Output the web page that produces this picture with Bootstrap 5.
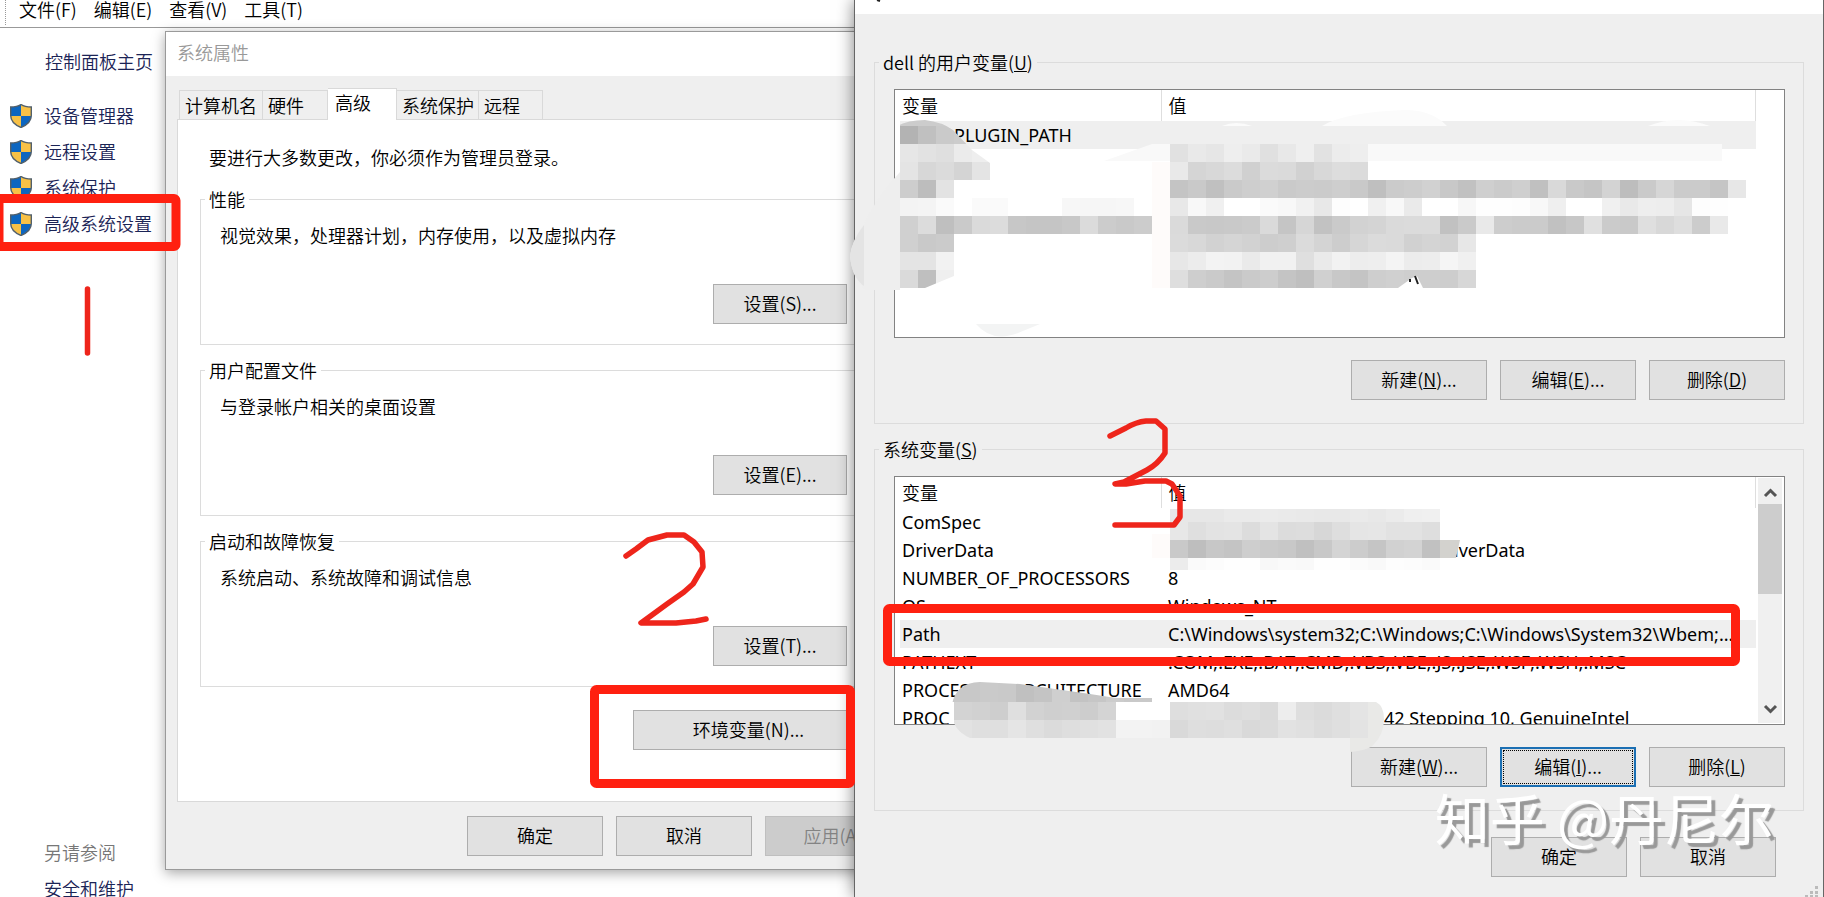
<!DOCTYPE html>
<html lang="zh-CN">
<head>
<meta charset="utf-8">
<meta name="viewport" content="width=device-width, initial-scale=1">
<title>系统属性 - 环境变量</title>
<link rel="stylesheet" href="https://cdn.jsdelivr.net/npm/bootstrap@5.3.0/dist/css/bootstrap.min.css">
<style>
  body { font: 350 18px/24px "Noto Sans CJK SC", sans-serif; color: #000; background: #fff; }
  button { font-weight: 350; }
  .desktop { height: 100vh; min-height: 897px; }
  .face { background: #efefef; }

  .menu-strip { height: 28px; padding-left: 19px; gap: 17px; border-bottom: 1px solid #999; }
  .menu-strip a { color: #000; height: 24px; line-height: 18px; }
  .menu-strip::before { content: ""; position: absolute; left: 5px; top: 0; height: 25px; border-left: 1px dotted #999; }

  .side { width: 165px; padding: 21px 0 0 10px; }
  .side a { color: #1b2456; }
  .side .home { margin-left: 35px; margin-bottom: 31px; }
  .task { height: 36px; gap: 12px; line-height: 22px; }
  .task svg { width: 22px; height: 24px; }
  .see-also { left: 44px; top: 834px; line-height: 36px; }
  .see-also span { color: #777; }

  .win-props { left: 165px; top: 31px; width: 748px; height: 839px; border: 1px solid #9a9a9a; box-shadow: 0 3px 12px rgba(0,0,0,.35); }
  .win-props .title { height: 44px; padding: 8px 11px; background: #fff; color: #999; }
  .win-props .inner { padding: 12px 11px 0; }
  .tabs button { background: #efefef; border: 1px solid #d9d9d9; border-bottom: 0; border-left-width: 0; height: 29px; text-align: left; white-space: nowrap; padding: 2px 5px; color: #000; }
  .tabs { height: 31px; padding-left: 2px; }
  .tabs button:first-child { border-left-width: 1px; }
  .tabs button.active { background: #fff; height: 32px; margin-bottom: -1px; position: relative; padding: 0 7px 6px; }
  .w-a { width: 84px; } .w-b { width: 65px; } .w-c { width: 69px; } .w-d { width: 82px; } .w-e { width: 64px; }
  .pane { background: #fff; border: 1px solid #d9d9d9; height: 683px; padding: 25px 22px 0; }
  .pane > p { margin: 0 9px 18px; }

  fieldset.group { border: 1px solid #dcdcdc; margin-bottom: 13px; }
  .group legend { float: none; width: auto; font-size: 18px; line-height: 24px; margin: 0 0 0 -15px; padding: 0 4px; }
  .pane .group { padding: 12px 30px 20px 19px; }
  .pane .group p { margin-bottom: 37px; }

  .push { height: 40px; width: 136px; padding: 0 0 2px; background: #e1e1e1; border: 1px solid #adadad; color: #000; }
  .push:disabled { background: #ccc; border-color: #bfbfbf; color: #838383; }
  .push.w-set { width: 134px; }
  .push.w-env { width: 231px; margin: 10px 14px 0 0; }
  .push.focus { border: 2px solid #1b6fb3; outline: 1px dotted #000; outline-offset: -4px; }
  .row-push { gap: 13px; }
  .foot-props { margin-top: 14px; }
  .foot-env { margin-top: 26px; padding-right: 28px; }

  .win-env { left: 854px; right: 0; top: 0; bottom: 0; border: 1px solid #666; border-width: 0 1px; box-shadow: 0 0 16px rgba(0,0,0,.5); }
  .win-env .title { height: 14px; background: #fff; }
  .win-env .inner { padding: 36px 19px 0; }
  .win-env .group { padding: 15px 18px 23px 19px; }
  .list-box { height: 249px; background: #fff; border: 1px solid #828282; margin-bottom: 22px; overflow: hidden; padding-left: 5px; }
  .vars { table-layout: fixed; width: 100%; font: 18px/28px "Noto Sans", "Noto Sans CJK SC", sans-serif; }
  .vars th { font: 350 18px/31px "Noto Sans CJK SC", sans-serif; height: 31px; border-right: 1px solid #dedede; }
  .vars th, .vars td { padding: 0 0 0 2px; white-space: nowrap; overflow: hidden; }
  .vars th:first-child { width: 261px; }
  .vars th + th, .vars td + td { padding-left: 7px; }
  .vars tr.sel td { background: #efefef; }
  .vars td { height: 28px; }
  .gap-a { margin-left: 52px; } .gap-b { margin-left: 286px; } .gap-c { margin-left: 216px; }
  .scroller { width: 24px; flex: none; margin: 1px 2px 1px 2px; background: #f0f0f0; }
  .scroller.off { visibility: hidden; }
  .scroller i { height: 90px; background: #cdcdcd; }
  .scroller svg { width: 24px; height: 26px; }

  .marks { left: 0; top: 0; width: 1824px; height: 897px; pointer-events: none; overflow: hidden; }
  .watermark { right: 50px; bottom: 46px; font-size: 55px; font-weight: 400; line-height: 70px; color: #fff; text-shadow: 4px 4px 1px #999; pointer-events: none; }
</style>
</head>
<body>
<svg class="d-none"><symbol id="shield" viewBox="0 0 22 24">
  <path d="M11 .5C8 2.500 4 3 .7 3v8.500C.7 17 5 21 11 23.500 17 21 21.300 17 21.300 11.500V3C18 3 14 2.500 11 .5z" fill="#f8c146"/>
  <path d="M11 .5C8 2.500 4 3 .7 3v9H11zM11 12h10.300C21.300 17 17 21 11 23.500z" fill="#0d66c0"/>
  <path d="M11 .5C8 2.500 4 3 .7 3v8.500C.7 17 5 21 11 23.500 17 21 21.300 17 21.300 11.500V3C18 3 14 2.500 11 .5z" fill="none" stroke="#52606b" stroke-width="1.400"/>
</symbol></svg>

<div class="desktop position-relative overflow-hidden">
  <nav class="menu-strip d-flex position-relative">
    <a class="text-decoration-none" href="#">文件(F)</a><a class="text-decoration-none" href="#">编辑(E)</a><a class="text-decoration-none" href="#">查看(V)</a><a class="text-decoration-none" href="#">工具(T)</a>
  </nav>
  <aside class="side d-flex flex-column">
    <a class="home text-decoration-none" href="#">控制面板主页</a>
    <a class="task d-flex text-decoration-none" href="#"><svg><use href="#shield"/></svg>设备管理器</a>
    <a class="task d-flex text-decoration-none" href="#"><svg><use href="#shield"/></svg>远程设置</a>
    <a class="task d-flex text-decoration-none" href="#"><svg><use href="#shield"/></svg>系统保护</a>
    <a class="task d-flex text-decoration-none" href="#"><svg><use href="#shield"/></svg>高级系统设置</a>
    <div class="see-also position-absolute d-flex flex-column"><span>另请参阅</span><a class="text-decoration-none" href="#">安全和维护</a></div>
  </aside>

  <section class="win-props face position-absolute">
    <div class="title">系统属性</div>
    <div class="inner">
      <div class="tabs d-flex align-items-end">
        <button class="w-a">计算机名</button><button class="w-b">硬件</button><button class="w-c active">高级</button><button class="w-d">系统保护</button><button class="w-e">远程</button>
      </div>
      <div class="pane">
        <p>要进行大多数更改，你必须作为管理员登录。</p>
        <fieldset class="group"><legend>性能</legend><p>视觉效果，处理器计划，内存使用，以及虚拟内存</p>
          <div class="d-flex justify-content-end"><button class="push w-set">设置(S)...</button></div></fieldset>
        <fieldset class="group"><legend>用户配置文件</legend><p>与登录帐户相关的桌面设置</p>
          <div class="d-flex justify-content-end"><button class="push w-set">设置(E)...</button></div></fieldset>
        <fieldset class="group"><legend>启动和故障恢复</legend><p>系统启动、系统故障和调试信息</p>
          <div class="d-flex justify-content-end"><button class="push w-set">设置(T)...</button></div></fieldset>
        <div class="d-flex justify-content-end"><button class="push w-env">环境变量(N)...</button></div>
      </div>
      <div class="row-push foot-props d-flex justify-content-end">
        <button class="push">确定</button><button class="push">取消</button><button class="push" disabled>应用(A)</button>
      </div>
    </div>
  </section>

  <section class="win-env face position-absolute">
    <div class="title"></div>
    <div class="inner">
      <fieldset class="group"><legend>dell 的用户变量(<u>U</u>)</legend>
        <div class="list-box d-flex">
          <div class="flex-grow-1"><table class="vars">
            <thead><tr><th>变量</th><th>值</th></tr></thead>
            <tbody><tr class="sel"><td><span class="gap-a">PLUGIN_PATH</span></td><td></td></tr></tbody>
          </table></div>
          <div class="scroller off"></div>
        </div>
        <div class="row-push d-flex justify-content-end">
          <button class="push">新建(<u>N</u>)...</button><button class="push">编辑(<u>E</u>)...</button><button class="push">删除(<u>D</u>)</button>
        </div>
      </fieldset>
      <fieldset class="group"><legend>系统变量(<u>S</u>)</legend>
        <div class="list-box d-flex">
          <div class="flex-grow-1"><table class="vars">
            <thead><tr><th>变量</th><th>值</th></tr></thead>
            <tbody>
              <tr><td>ComSpec</td><td></td></tr>
              <tr><td>DriverData</td><td><span class="gap-b">iverData</span></td></tr>
              <tr><td>NUMBER_OF_PROCESSORS</td><td>8</td></tr>
              <tr><td>OS</td><td>Windows_NT</td></tr>
              <tr class="sel"><td>Path</td><td>C:\Windows\system32;C:\Windows;C:\Windows\System32\Wbem;...</td></tr>
              <tr><td>PATHEXT</td><td>.COM;.EXE;.BAT;.CMD;.VBS;.VBE;.JS;.JSE;.WSF;.WSH;.MSC</td></tr>
              <tr><td>PROCESSOR_ARCHITECTURE</td><td>AMD64</td></tr>
              <tr><td>PROC</td><td><span class="gap-c">42 Stepping 10, GenuineIntel</span></td></tr>
            </tbody>
          </table></div>
          <div class="scroller d-flex flex-column">
            <svg><path d="M7 18l5.500-5.500L18 18" fill="none" stroke="#555" stroke-width="3"/></svg>
            <i></i>
            <svg class="mt-auto"><path d="M7 9l5.500 5.500L18 9" fill="none" stroke="#555" stroke-width="3"/></svg>
          </div>
        </div>
        <div class="row-push d-flex justify-content-end">
          <button class="push">新建(<u>W</u>)...</button><button class="push focus">编辑(<u>I</u>)...</button><button class="push">删除(<u>L</u>)</button>
        </div>
      </fieldset>
      <div class="row-push foot-env d-flex justify-content-end">
        <button class="push">确定</button><button class="push">取消</button>
      </div>
    </div>
  </section>

  <svg class="marks position-absolute" viewBox="0 0 1824 897" aria-hidden="true">
    <defs>
      <clipPath id="headClip"><path d="M897 126Q908 120 925 120Q942 122 953 130L972 150L990 163V180H954V276L925 288H900V172Q890 146 900 130z"/></clipPath>
      <clipPath id="footClip"><path d="M952 705Q955 683 980 682L1020 684L1090 694L1116 698H1152V738H970Q952 730 952 712z"/></clipPath>
    </defs>
    <path d="M900 172L893 180Q872 205 864 225Q852 240 850 256Q852 278 866 290H900z" fill="#eee"/>
    <path d="M864 225Q852 240 850 256Q852 278 864 286z" fill="#e4e4e4"/>
    <path d="M976 324h64l-22 9q-26 10-42-9z" fill="#f3f4f4"/>
    <path d="M1104 161L1152 144H1722V161z" fill="#f9f9f9"/>
    <path d="M1322 126Q1345 112 1405 110Q1432 110 1447 126zM1648 126q30-12 62 0zM1222 126q14-6 30 0z" fill="#fbfbfb"/>
    <path d="M1152 162h18v126h-18zM1152 534h18v24h-18z" fill="#fefbfa"/>
    <g id="head" clip-path="url(#headClip)"></g>
    <g id="body"></g>
    <path d="M1398 288L1412 278L1417 276L1423 288z" fill="#fff"/>
    <path d="M1415 276l3 8M1410 279v3" stroke="#222" stroke-width="2"/>
    <path d="M1116 702h54v18h-54z" fill="#fff"/><path d="M1116 720h54v18h-54z" fill="#f2f2f2"/>
    <g id="foot" clip-path="url(#footClip)"></g>
    <path d="M1368 702h8q8 4 8 17q0 15-10 25q-4 6-24 8v-14h18z" fill="#e9e9e7"/>
    <path d="M1440 540h20l-4 18h-16z" fill="#d3d2ce"/>
    <path d="M877 0l3 1" stroke="#222" stroke-width="2"/>
    <g fill="#bbb"><path d="M1815 886h3v3h-3zM1815 891h3v3h-3zM1810 891h3v3h-3zM1815 895h3v2h-3zM1810 895h3v2h-3zM1805 895h3v2h-3z"/></g>
    <g fill="none" stroke="#ff2010" stroke-linejoin="round" stroke-width="9">
      <rect x="-1" y="198.500" width="177" height="48" rx="2"/>
      <rect x="594.500" y="689.500" width="256" height="94" rx="2"/>
      <rect x="887.500" y="608.500" width="848" height="53" rx="2"/>
    </g>
    <g fill="none" stroke="#ee251b" stroke-linejoin="round" stroke-linecap="round" stroke-width="5.500">
      <path d="M87.500 289V353"/>
      <path d="M626 556L636 549L648 540L667 535H684L694 542L702 552L703 567L693 584L684 592L667 604L652 615L641 623H676L696 621L706 619"/>
      <path d="M1110 436L1126 428Q1136 422 1146 421H1156L1165 429V453Q1158 464 1147 470L1124 482L1115 484H1126L1145 481H1166L1172 484L1180 496V517L1174 525H1115"/>
    </g>
  </svg>
  <div class="watermark position-absolute">知乎 @丹尼尔</div>
</div>

<script>
// Censor mosaic: each entry is a group, a start point, a cell height and one grey level per 18px cell.
const mosaic = [
  ['head', 900,120, 6,'cccccc'],
  ['head', 900,126,18,'b3c0cacccc'],
  ['head', 900,144,18,'e6e2dfebee'],
  ['head', 900,162,18,'e4d7dbd4e4'],
  ['head', 900,180,18,'cdbde3'],
  ['head', 900,198,18,'f3f4fa'],
  ['head', 900,216,18,'d0dcbf'],
  ['head', 900,234,18,'d0c9cb'],
  ['head', 900,252,18,'e4e4f2'],
  ['head', 900,270,18,'dabfef'],
  ['body', 972,198,18,'fafafffffff7f6f6f7'],
  ['body', 954,216,18,'cadadcc7c5c5c8dbccc9cc'],
  ['body',1170,144,18,'e1e9e6eeeae0e8efe2ecee'],
  ['body',1170,162,18,'e9d5d8dcd0dbdad1d8dddb'],
  ['body',1170,180,18,'c4c9c0caced0cacccbcec9bfcbcdd1c8c1cfcbcfc0d9c9c5d3bdcad6cbcbc5dc'],
  ['body',1728,180,18,'e7'],
  ['body',1170,198,18,'e8f8f0fffffaf8f1e8fdfff0f8eafffff7fefefdf8effffff0e9eeede6fdfe'],
  ['body',1170,216,18,'dac9c8c9cbdac5d6c2cad2d4dadbdbc1cae9cdcbcbc1c7e0cbc9dfd8dedfd2'],
  ['body',1692,216,18,'cce9'],
  ['body',1170,234,18,'dbd8d2d5d2cdcfdbd4cdd6dbdad1d4d2e7'],
  ['body',1170,252,18,'e7ecf3f2eaf1f1dfeaf2edeef4ecedf5f0'],
  ['body',1170,270,18,'dececac4cacdc4bfd0c8c4ced0cececdd7'],
  ['body',1170,509,13,'e7e7e7eaeaebeae9e8e8eae8ebeff0'],
  ['body',1170,522,18,'e7dfe3e4dce4dcddd7dee5e6e2e2de'],
  ['body',1170,540,18,'c9bec7c4cecac8c0c8d4ccc5d1d3c1'],
  ['body',1170,558,12,'ecfafcfefef8faf9fefefbf9fdfcfa'],
  ['foot', 944,682,20,'c8c8cac9c0c4cfc3c6ccc9c9'],
  ['foot', 954,702,18,'d3d1cedfd2cfd0cdd4ffff'],
  ['foot', 954,720,18,'e2dfdfe5dfdbdee0e2f3f3'],
  ['body',1170,702,18,'dee0e1dcdedaeddedbdfe4'],
  ['body',1170,720,18,'d9dedddfd9dbe2e0dcdfe3']
];
for (const [group, x, y, h, levels] of mosaic) {
  const target = document.getElementById(group);
  levels.match(/../g).forEach((v, i) => {
    const cell = document.createElementNS('http://www.w3.org/2000/svg', 'rect');
    cell.setAttribute('x', x + i * 18);
    cell.setAttribute('y', y);
    cell.setAttribute('width', 18);
    cell.setAttribute('height', h);
    cell.setAttribute('fill', '#' + v + v + v);
    target.appendChild(cell);
  });
}
</script>
<script src="https://cdn.jsdelivr.net/npm/bootstrap@5.3.0/dist/js/bootstrap.bundle.min.js"></script>
</body>
</html>
